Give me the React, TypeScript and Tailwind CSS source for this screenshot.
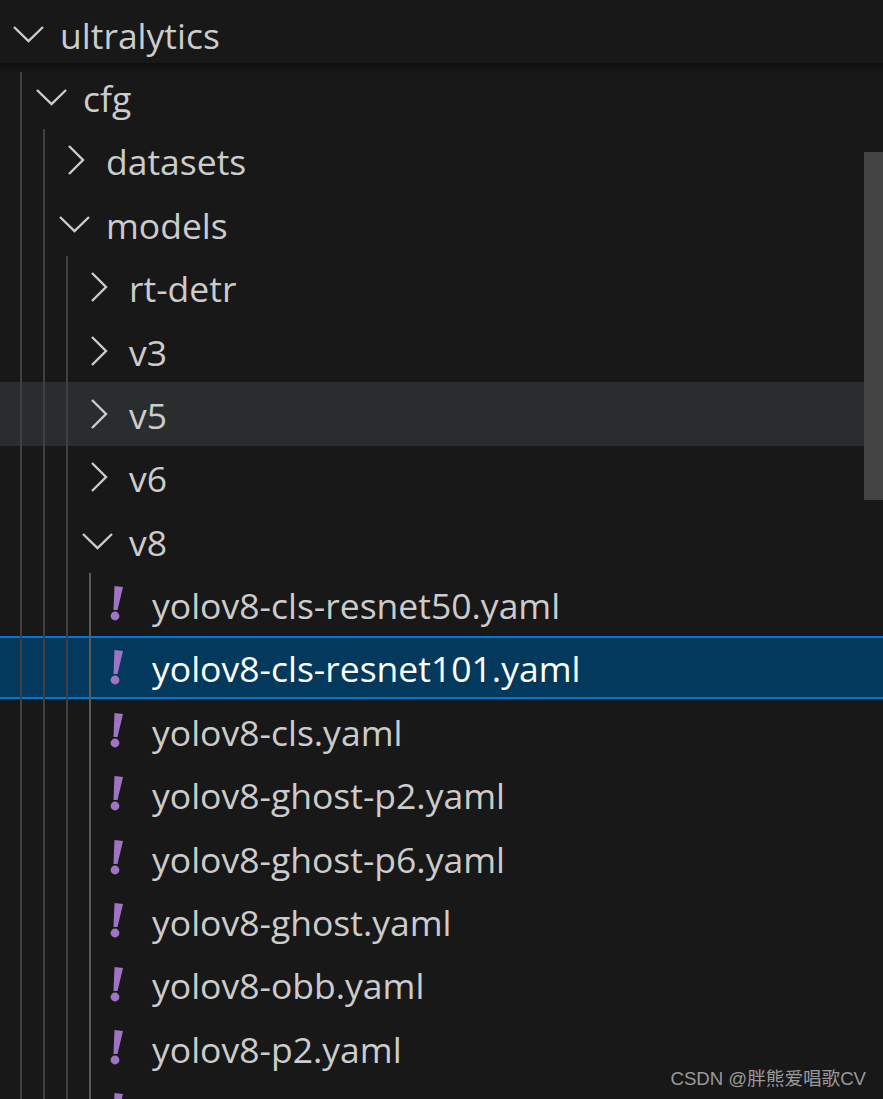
const rows = [
  { label: "ultralytics", depth: 0, kind: "open" },
  { label: "cfg", depth: 1, kind: "open" },
  { label: "datasets", depth: 2, kind: "closed" },
  { label: "models", depth: 2, kind: "open" },
  { label: "rt-detr", depth: 3, kind: "closed" },
  { label: "v3", depth: 3, kind: "closed" },
  { label: "v5", depth: 3, kind: "closed", hover: true },
  { label: "v6", depth: 3, kind: "closed" },
  { label: "v8", depth: 3, kind: "open" },
  { label: "yolov8-cls-resnet50.yaml", depth: 4, kind: "file" },
  { label: "yolov8-cls-resnet101.yaml", depth: 4, kind: "file", selected: true },
  { label: "yolov8-cls.yaml", depth: 4, kind: "file" },
  { label: "yolov8-ghost-p2.yaml", depth: 4, kind: "file" },
  { label: "yolov8-ghost-p6.yaml", depth: 4, kind: "file" },
  { label: "yolov8-ghost.yaml", depth: 4, kind: "file" },
  { label: "yolov8-obb.yaml", depth: 4, kind: "file" },
  { label: "yolov8-p2.yaml", depth: 4, kind: "file" },
  { label: "", depth: 4, kind: "file" },
];

const Chevron = ({ open }: { open: boolean }) => (
  <svg viewBox="0 0 36 36" className="w-9 h-9 -ml-[10px] shrink-0" fill="none" stroke="#cccccc" strokeWidth="2.4">
    {open ? <path d="M4 11 L18.5 25 L33 11" /> : <path d="M13 4 L27 18 L13 32" />}
  </svg>
);

const YamlIcon = () => (
  <svg viewBox="0 0 14 36" className="w-[14px] h-9 -ml-[2px] shrink-0" fill="#a074c4">
    <path d="M4.5 0 L13 1 L7.5 24 L3.5 24 Z" />
    <circle cx="5" cy="30" r="4.4" />
  </svg>
);

export default function App() {
  return (
    <div className="relative h-[1099px] w-[883px] overflow-hidden bg-[#181818] pt-[2px] font-['Open_Sans','Noto_Sans',sans-serif] text-[35.5px] text-[#cccccc]">
      {rows.map((row, i) => (
        <div
          key={i}
          className={`flex h-[63.4px] items-center pl-[20px] ${row.hover ? "bg-[#2a2d2e]" : ""} ${
            row.selected ? "bg-[#04395e] text-white shadow-[inset_0_2px_0_#0078d4,inset_0_-2px_0_#0078d4]" : ""
          }`}
        >
          {Array.from({ length: row.depth }).map((_, g) => (
            <span
              key={g}
              className={`h-full w-[23px] shrink-0 border-l-2 ${g === 3 ? "border-[#5a5a5a]" : "border-[#404040]"}`}
            />
          ))}
          <span className="flex w-[40px] shrink-0 items-center">
            {row.kind === "file" ? <YamlIcon /> : <Chevron open={row.kind === "open"} />}
          </span>
          <span className="whitespace-nowrap pt-[3px]">{row.label}</span>
        </div>
      ))}

      {/* sticky header shadow */}
      <div className="absolute left-0 right-0 top-[63px] h-[9px] bg-gradient-to-b from-[#0f0f0f] to-[#161616]" />

      {/* scrollbar thumb */}
      <div className="absolute right-0 top-[152px] h-[348px] w-[19px] bg-[#434343]" />

      <div className="absolute right-[17px] top-[1068px] font-['Liberation_Sans','Noto_Sans_CJK_SC',sans-serif] text-[18.6px] leading-[22px] text-[#9a9a9a]">
        CSDN @胖熊爱唱歌CV
      </div>
    </div>
  );
}
